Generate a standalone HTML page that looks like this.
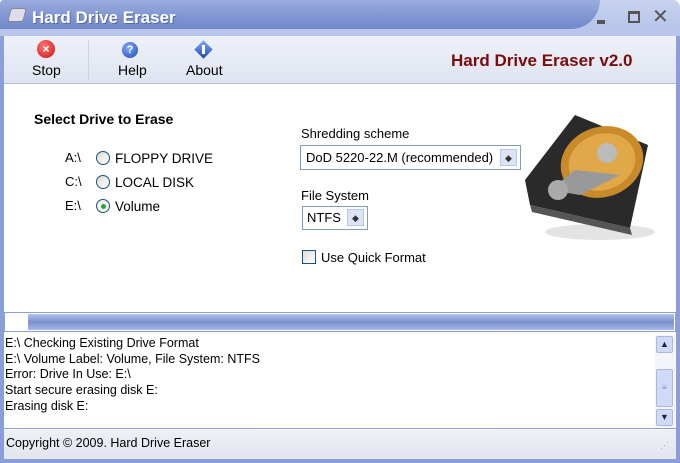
<!DOCTYPE html>
<html><head><style>
*{margin:0;padding:0;box-sizing:border-box}
body{width:680px;height:463px;overflow:hidden;font-family:"Liberation Sans",sans-serif;background:#fff;position:relative}
.abs{position:absolute}
.t{font-size:13px;color:#000;white-space:nowrap}
</style></head><body>
<!-- title bar -->
<div class="abs" style="left:0;top:0;width:680px;height:36px;background:linear-gradient(#c9d3ef,#b3c1e8);border-radius:7px 7px 0 0"></div>
<div class="abs" style="left:0;top:0;width:600px;height:29px;background:linear-gradient(#9aaddf,#7f94d1 60%,#7389cb);border-radius:7px 0 60px 0"></div>
<div class="abs" style="left:0;top:29px;width:680px;height:7px;background:#b9c5ea"></div>
<div class="abs" style="left:9px;top:8px;width:16px;height:14px;background:#dde;border-radius:3px;transform:skewX(-15deg);border:1px solid #888"></div>
<div class="abs" style="left:32px;top:8px;font-size:17px;font-weight:bold;color:#fff;text-shadow:1px 1px #5567a8">Hard Drive Eraser</div>
<div class="abs" style="left:597px;top:20px;width:8px;height:4px;background:#555"></div>
<div class="abs" style="left:628px;top:11px;width:12px;height:12px;border:2px solid #555;border-top-width:3px"></div>
<div class="abs" style="left:652px;top:4px;font-size:20px;color:#555">✕</div>
<!-- side borders -->
<div class="abs" style="left:0;top:36px;width:4px;height:427px;background:#8a9fd8"></div>
<div class="abs" style="left:676px;top:36px;width:4px;height:427px;background:#8a9fd8"></div>
<div class="abs" style="left:0;top:459px;width:680px;height:4px;background:#8a9fd8"></div>
<!-- toolbar -->
<div class="abs" style="left:4px;top:36px;width:672px;height:48px;background:linear-gradient(#eef1f8,#dfe4f1);border-bottom:1px solid #b8bccc"></div>
<div class="abs" style="left:88px;top:40px;width:1px;height:40px;background:#cfd3df"></div>
<div class="abs" style="left:37px;top:40px;width:18px;height:18px;border-radius:50%;background:radial-gradient(circle at 40% 35%,#f77,#c11);color:#fff;font-size:12px;font-weight:bold;text-align:center;line-height:18px">×</div>
<div class="abs t" style="left:32px;top:62px;font-size:14px">Stop</div>
<div class="abs" style="left:122px;top:42px;width:16px;height:16px;border-radius:50%;background:radial-gradient(circle at 40% 35%,#8af,#1749b0);color:#fff;font-size:11px;font-weight:bold;text-align:center;line-height:16px">?</div>
<div class="abs t" style="left:118px;top:62px;font-size:14px">Help</div>
<div class="abs" style="left:197px;top:43px;width:13px;height:13px;transform:rotate(45deg);background:linear-gradient(135deg,#8af,#1749b0)"></div>
<div class="abs" style="left:202px;top:45px;width:3px;height:9px;background:#fff"></div>
<div class="abs t" style="left:186px;top:62px;font-size:14px">About</div>
<div class="abs" style="left:451px;top:51px;font-size:17px;font-weight:bold;color:#7a0c0c;white-space:nowrap">Hard Drive Eraser v2.0</div>
<!-- main -->
<div class="abs t" style="left:34px;top:111px;font-size:14px;font-weight:bold">Select Drive to Erase</div>
<div class="abs t" style="left:65px;top:150px">A:\</div>
<div class="abs t" style="left:65px;top:174px">C:\</div>
<div class="abs t" style="left:65px;top:198px">E:\</div>
<div class="abs" style="left:96px;top:151px;width:14px;height:14px;border:1px solid #1c5180;border-radius:50%;background:linear-gradient(135deg,#dcdcd5,#fff)"></div>
<div class="abs" style="left:96px;top:175px;width:14px;height:14px;border:1px solid #1c5180;border-radius:50%;background:linear-gradient(135deg,#dcdcd5,#fff)"></div>
<div class="abs" style="left:96px;top:199px;width:14px;height:14px;border:1px solid #1c5180;border-radius:50%;background:#f4f4f0"></div>
<div class="abs" style="left:101px;top:204px;width:5px;height:5px;border-radius:50%;background:#2fa12f"></div>
<div class="abs t" style="left:115px;top:151px;font-size:13.5px">FLOPPY DRIVE</div>
<div class="abs t" style="left:115px;top:175px;font-size:13.5px">LOCAL DISK</div>
<div class="abs t" style="left:115px;top:199px;font-size:13.5px">Volume</div>
<div class="abs t" style="left:301px;top:126px">Shredding scheme</div>
<div class="abs" style="left:300px;top:145px;width:221px;height:25px;border:1px solid #7f9db9"></div>
<div class="abs t" style="left:306px;top:150px">DoD 5220-22.M (recommended)</div>
<div class="abs" style="left:500px;top:149px;width:17px;height:17px;border:1px solid #b8c6e8;background:#dbe3f7;font-size:9px;text-align:center;line-height:16px;color:#333">◆</div>
<div class="abs t" style="left:301px;top:188px">File System</div>
<div class="abs" style="left:302px;top:206px;width:66px;height:24px;border:1px solid #7f9db9"></div>
<div class="abs t" style="left:307px;top:210px">NTFS</div>
<div class="abs" style="left:347px;top:209px;width:17px;height:17px;border:1px solid #b8c6e8;background:#dbe3f7;font-size:9px;text-align:center;line-height:16px;color:#333">◆</div>
<div class="abs" style="left:302px;top:250px;width:14px;height:14px;border:1px solid #1c5180;background:linear-gradient(135deg,#dcdcd5,#fff)"></div>
<div class="abs t" style="left:321px;top:250px">Use Quick Format</div>
<!-- drive image -->
<svg class="abs" style="left:520px;top:110px" width="150" height="135" viewBox="0 0 150 135">
<ellipse cx="80" cy="122" rx="55" ry="8" fill="#e4e4e4"/>
<polygon points="55,5 128,35 110,118 10,95 5,70" fill="#2a2a2a"/>
<polygon points="10,95 110,118 112,125 12,102" fill="#555"/>
<ellipse cx="82" cy="52" rx="42" ry="35" fill="#c98a2a" transform="rotate(-20 82 52)"/>
<ellipse cx="82" cy="52" rx="34" ry="28" fill="#e0a849" transform="rotate(-20 82 52)"/>
<circle cx="87" cy="43" r="10" fill="#bbb"/>
<polygon points="30,80 55,60 100,65 60,85" fill="#999"/>
<circle cx="38" cy="80" r="10" fill="#aaa"/>
</svg>
<!-- progress -->
<div class="abs" style="left:4px;top:312px;width:672px;height:20px;background:#fff;border:1px solid #8a9fd8"></div>
<div class="abs" style="left:28px;top:314px;width:646px;height:16px;background:linear-gradient(#b5c1ea,#7c91d2 50%,#aab8e6)"></div>
<!-- log -->
<div class="abs" style="left:4px;top:334px;width:672px;height:95px;background:#fff;border-bottom:1px solid #8a9fd8"></div>
<div class="abs" style="left:5px;top:336px;font-size:12.5px;line-height:15.7px;white-space:pre;color:#000">E:\ Checking Existing Drive Format
E:\ Volume Label: Volume, File System: NTFS
Error: Drive In Use: E:\
Start secure erasing disk E:
Erasing disk E:</div>
<div class="abs" style="left:655px;top:335px;width:20px;height:93px;background:#f3f5fb"></div>
<div class="abs" style="left:656px;top:336px;width:17px;height:17px;border:1px solid #aab8e0;background:#cfdaf7;border-radius:2px;font-size:9px;text-align:center;line-height:15px;color:#224">▲</div>
<div class="abs" style="left:656px;top:369px;width:17px;height:38px;border:1px solid #aab8e0;background:#cfdaf7;border-radius:2px;font-size:8px;text-align:center;line-height:36px;color:#889">≡</div>
<div class="abs" style="left:656px;top:409px;width:17px;height:17px;border:1px solid #aab8e0;background:#cfdaf7;border-radius:2px;font-size:9px;text-align:center;line-height:15px;color:#224">▼</div>
<!-- status -->
<div class="abs" style="left:4px;top:430px;width:672px;height:29px;background:linear-gradient(#eef0f6,#e2e5ee)"></div>
<div class="abs t" style="left:6px;top:436px;font-size:12.5px">Copyright © 2009. Hard Drive Eraser</div>
<div class="abs" style="left:660px;top:440px;font-size:9px;color:#aaa">⋰</div>
</body></html>
